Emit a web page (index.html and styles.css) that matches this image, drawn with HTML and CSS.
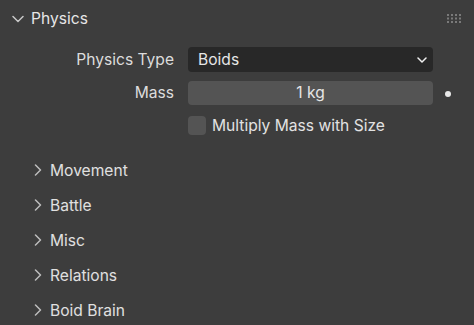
FILE: index.html
```html
<!DOCTYPE html>
<html lang="en">
<head>
  <meta charset="UTF-8">
  <title>Physics</title>
  <link rel="stylesheet" href="styles.css">
</head>
<body>
  <div class="panel">
    <div class="panel-header">
      <svg class="chev-down" width="12" height="8" viewBox="0 0 12 8"><path d="M1 1.5 L6 6.5 L11 1.5" fill="none" stroke="#c8c8c8" stroke-width="1.5" stroke-linecap="round" stroke-linejoin="round"/></svg>
      <span class="panel-title">Physics</span>
      <svg class="grip" width="14" height="9" viewBox="0 0 14 9">
        <g fill="#8a8a8a">
          <rect x="0" y="0" width="2" height="2"/><rect x="4" y="0" width="2" height="2"/><rect x="8" y="0" width="2" height="2"/><rect x="12" y="0" width="2" height="2"/>
          <rect x="0" y="3.5" width="2" height="2"/><rect x="4" y="3.5" width="2" height="2"/><rect x="8" y="3.5" width="2" height="2"/><rect x="12" y="3.5" width="2" height="2"/>
          <rect x="0" y="7" width="2" height="2"/><rect x="4" y="7" width="2" height="2"/><rect x="8" y="7" width="2" height="2"/><rect x="12" y="7" width="2" height="2"/>
        </g>
      </svg>
    </div>

    <div class="props">
      <div class="prop-row">
        <label class="prop-label">Physics Type</label>
        <div class="dropdown">
          <span>Boids</span>
          <svg width="10" height="6" viewBox="0 0 10 6"><path d="M1 1 L5 5 L9 1" fill="none" stroke="#f0f0f0" stroke-width="1.5" stroke-linecap="round" stroke-linejoin="round"/></svg>
        </div>
        <div class="deco"></div>
      </div>
      <div class="prop-row">
        <label class="prop-label">Mass</label>
        <div class="number-field">1 kg</div>
        <div class="deco"><span class="anim-dot"></span></div>
      </div>
      <div class="prop-row">
        <span></span>
        <div class="check-row">
          <span class="checkbox"></span>
          <span>Multiply Mass with Size</span>
        </div>
        <div class="deco"></div>
      </div>
    </div>

    <div class="subpanels">
      <div class="subpanel">
        <svg class="chev-right" width="8" height="12" viewBox="0 0 8 12"><path d="M1.5 1 L6.5 6 L1.5 11" fill="none" stroke="#bdbdbd" stroke-width="1.5" stroke-linecap="round" stroke-linejoin="round"/></svg>
        <span>Movement</span>
      </div>
      <div class="subpanel">
        <svg class="chev-right" width="8" height="12" viewBox="0 0 8 12"><path d="M1.5 1 L6.5 6 L1.5 11" fill="none" stroke="#bdbdbd" stroke-width="1.5" stroke-linecap="round" stroke-linejoin="round"/></svg>
        <span>Battle</span>
      </div>
      <div class="subpanel">
        <svg class="chev-right" width="8" height="12" viewBox="0 0 8 12"><path d="M1.5 1 L6.5 6 L1.5 11" fill="none" stroke="#bdbdbd" stroke-width="1.5" stroke-linecap="round" stroke-linejoin="round"/></svg>
        <span>Misc</span>
      </div>
      <div class="subpanel">
        <svg class="chev-right" width="8" height="12" viewBox="0 0 8 12"><path d="M1.5 1 L6.5 6 L1.5 11" fill="none" stroke="#bdbdbd" stroke-width="1.5" stroke-linecap="round" stroke-linejoin="round"/></svg>
        <span>Relations</span>
      </div>
      <div class="subpanel">
        <svg class="chev-right" width="8" height="12" viewBox="0 0 8 12"><path d="M1.5 1 L6.5 6 L1.5 11" fill="none" stroke="#bdbdbd" stroke-width="1.5" stroke-linecap="round" stroke-linejoin="round"/></svg>
        <span>Boid Brain</span>
      </div>
    </div>
  </div>
</body>
</html>
```

FILE: styles.css
```css
html, body {
  margin: 0;
  padding: 0;
  background: #3d3d3d;
  height: 100%;
  overflow: hidden;
}

body {
  font-family: Inter, "Noto Sans", sans-serif;
  font-size: 15.6px;
  color: #e2e2e2;
}

.panel {
  width: 474px;
}

.panel-header {
  height: 37px;
  display: flex;
  align-items: center;
  padding-left: 12px;
  padding-right: 12px;
}

.chev-down {
  margin-right: 7px;
  margin-top: 1px;
}

.panel-title {
  flex: 1;
  font-size: 15.6px;
  color: #e6e6e6;
}

.grip {
  margin-right: 1px;
  opacity: 0.8;
}

.props {
  padding-top: 6px;
}

.prop-row {
  display: grid;
  grid-template-columns: 174px 245px 40px;
  column-gap: 14px;
  height: 33px;
  align-items: center;
}

.prop-label {
  text-align: right;
  color: #dcdcdc;
}

.dropdown {
  height: 25px;
  background: #282828;
  border-radius: 4px;
  display: flex;
  align-items: center;
  justify-content: space-between;
  padding: 0 6px 0 10px;
  color: #e6e6e6;
}

.number-field {
  height: 24px;
  background: #545454;
  border-radius: 4px;
  display: flex;
  align-items: center;
  justify-content: center;
  color: #e6e6e6;
}

.deco {
  display: flex;
  align-items: center;
}

.anim-dot {
  width: 6px;
  height: 6px;
  border-radius: 50%;
  background: #e8e8e8;
  margin-left: -2px;
  margin-top: 3px;
}

.check-row {
  display: flex;
  align-items: center;
  gap: 6px;
  color: #e2e2e2;
}

.checkbox {
  width: 18px;
  height: 19px;
  background: #545454;
  border-radius: 4px;
}

.subpanels {
  padding-top: 11px;
}

.subpanel {
  height: 35px;
  display: flex;
  align-items: center;
  padding-left: 34px;
  color: #e0e0e0;
}

.chev-right {
  margin-right: 8px;
  margin-top: -1px;
}
```
